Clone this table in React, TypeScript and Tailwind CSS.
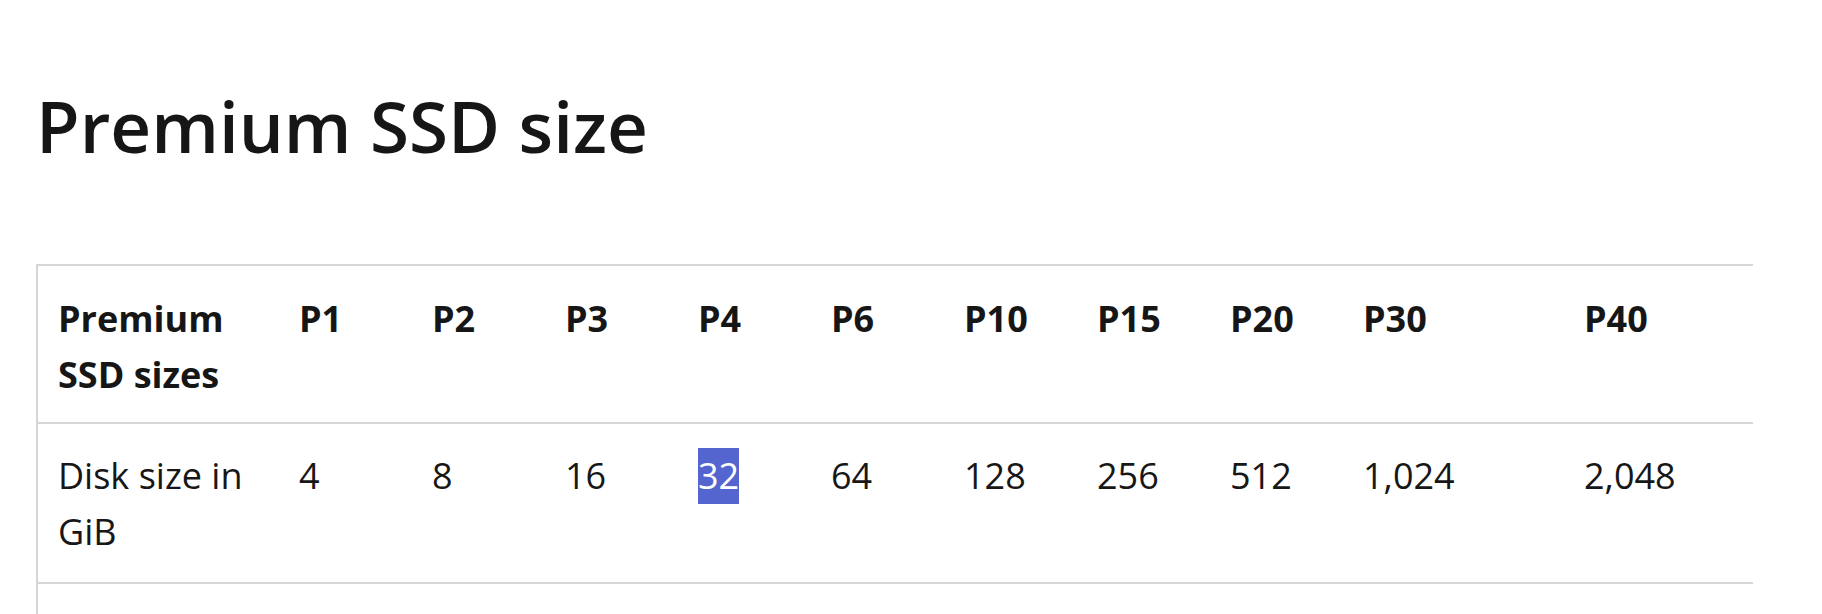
import React from "react";

const headers = ["P1", "P2", "P3", "P4", "P6", "P10", "P15", "P20", "P30", "P40"];
const sizes = ["4", "8", "16", "32", "64", "128", "256", "512", "1,024", "2,048"];

const gridCols =
  "grid grid-cols-[241px_133px_133px_133px_133px_133px_133px_133px_133px_221px_189px]";

export default function App() {
  return (
    <div
      className="w-[1822px] h-[614px] overflow-hidden bg-white pl-[36px] text-[#171717]"
      style={{ fontFamily: '"Open Sans", "Noto Sans", sans-serif' }}
    >
      <h1 className="pt-[79px] text-[71px] font-semibold leading-[94px] text-[#161616]">
        Premium SSD size
      </h1>
      <div className="mt-[91px] w-[1717px] border-l-2 border-t-2 border-[#d6d6d6] text-[36px] leading-[56px]">
        <div className={`${gridCols} border-b-2 border-[#d6d6d6] font-bold text-[#161616]`}>
          <div className="px-[20px] pt-[25px] pb-[19px]">Premium SSD sizes</div>
          {headers.map((h) => (
            <div key={h} className="px-[20px] pt-[25px] pb-[19px]">
              {h}
            </div>
          ))}
        </div>
        <div className={`${gridCols} border-b-2 border-[#d6d6d6]`}>
          <div className="px-[20px] pt-[24px] pb-[22px]">Disk size in GiB</div>
          {sizes.map((s) => (
            <div key={s} className="px-[20px] pt-[24px] pb-[22px]">
              {s === "32" ? (
                <span className="inline-block h-[56px] bg-[#5565d0] text-white">32</span>
              ) : (
                s
              )}
            </div>
          ))}
        </div>
        <div className="h-[100px]" />
      </div>
    </div>
  );
}
